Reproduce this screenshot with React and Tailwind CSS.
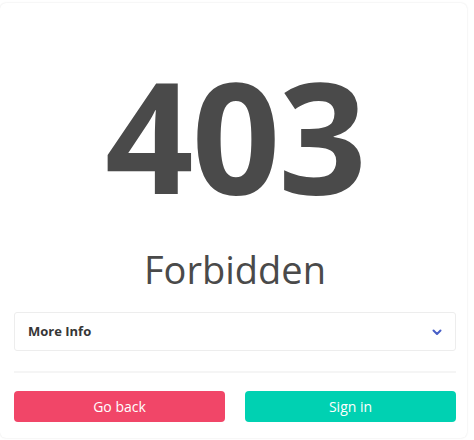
import React from 'react';

const ChevronDown = () => (
  <svg width="10" height="8" viewBox="0 0 10 8" fill="none">
    <path d="M1.5 2.5 L5 6 L8.5 2.5" stroke="#485fc7" strokeWidth="2" strokeLinecap="round" strokeLinejoin="round" />
  </svg>
);

const App = () => {
  return (
    <div className="min-h-screen bg-white pt-[3px]" style={{ fontFamily: '"Open Sans", "Liberation Sans", sans-serif' }}>
      <div className="w-[467px] h-[435px] rounded-md bg-white shadow-[0_0_2px_rgba(0,0,0,0.12)] pl-[14px] pr-[11px] flex flex-col text-[#4a4a4a]">
        <h1 className="mt-[53px] text-[155px] leading-none font-bold text-center tracking-[-2px]">403</h1>
        <h2 className="mt-[38px] text-[38px] leading-[40px] text-center">Forbidden</h2>

        <button className="mt-[23px] h-[39px] w-full flex items-center justify-between px-[13px] border border-[#ededed] rounded-[3px] bg-white">
          <span className="text-[13px] font-bold text-[#363636]">More Info</span>
          <ChevronDown />
        </button>

        <div className="mt-[20px] h-[2px] bg-[#f5f5f5]" />

        <div className="mt-[18px] grid grid-cols-2 gap-[20px]">
          <button className="h-[31px] rounded-[4px] bg-[#f14668] text-white text-[14px]">Go back</button>
          <button className="h-[31px] rounded-[4px] bg-[#00d1b2] text-white text-[14px]">Sign in</button>
        </div>
      </div>
    </div>
  );
};

export default App;
